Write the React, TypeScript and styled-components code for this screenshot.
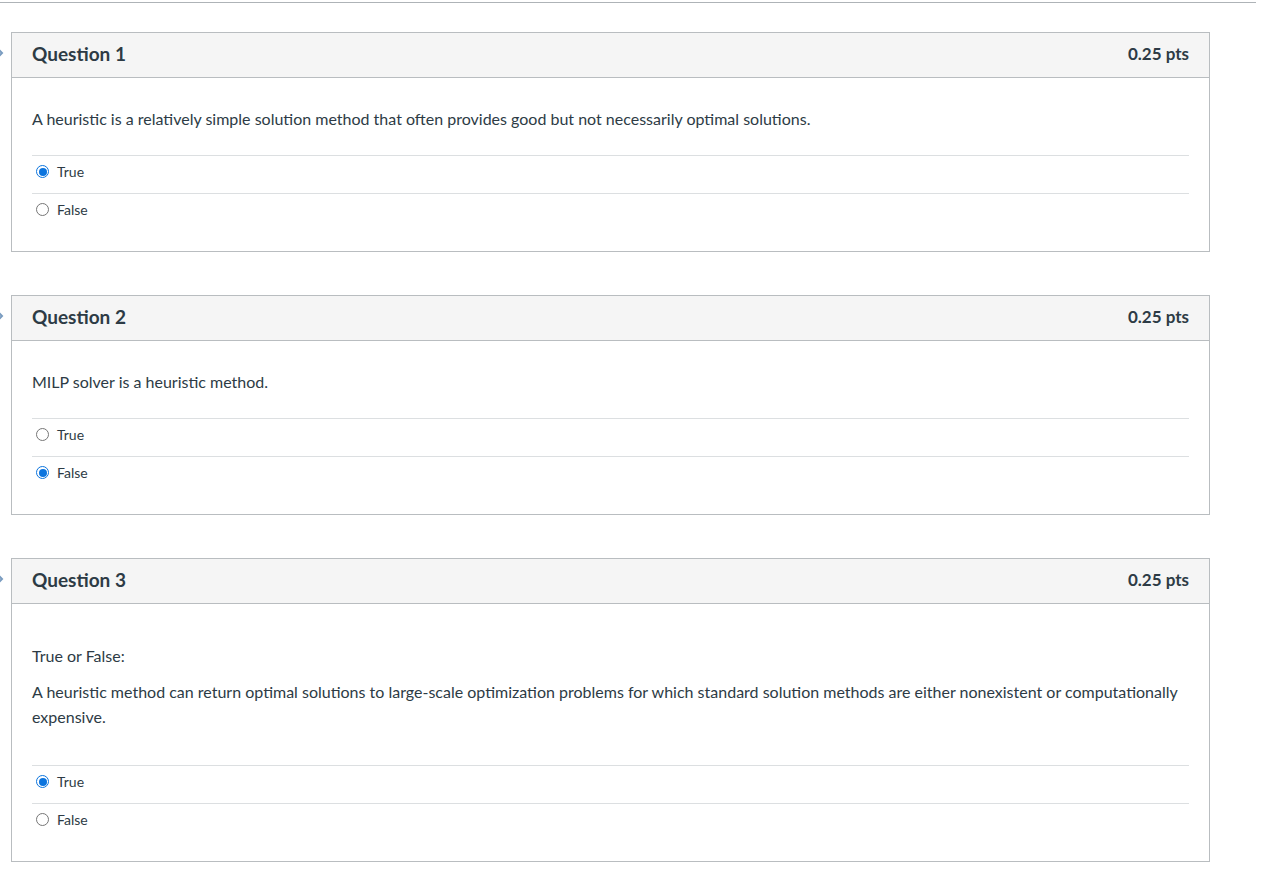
import React from 'react';
import styled, { createGlobalStyle } from 'styled-components';

const GlobalStyle = createGlobalStyle`
  html, body {
    margin: 0;
    padding: 0;
    background: #ffffff;
    font-family: Lato, "Open Sans", "Liberation Sans", sans-serif;
    color: #2d3b45;
  }
`;

const Page = styled.div`
  width: 1273px;
  padding-top: 2px;
`;

const TopRule = styled.div`
  width: 1256px;
  height: 1px;
  background: #aeb3b7;
  margin-bottom: 29px;
`;

const QuestionRow = styled.div`
  display: flex;
  margin-bottom: 43px;
`;

const Marker = styled.div`
  width: 11px;
  flex: none;
  overflow: hidden;
  display: flex;
  align-items: flex-start;
  padding-top: 16px;

  svg {
    margin-left: -4px;
  }
`;

const Card = styled.div`
  width: 1197px;
  border: 1px solid #b9bdc0;
  background: #ffffff;
`;

const Header = styled.div`
  height: 40px;
  padding: 0 20px 4px;
  background: #f5f5f5;
  border-bottom: 1px solid #b9bdc0;
  display: flex;
  align-items: center;
  justify-content: space-between;
`;

const Title = styled.div`
  font-size: 19px;
  font-weight: 700;
  color: #2d3b45;
`;

const Points = styled.div`
  font-size: 17px;
  font-weight: 700;
  color: #2d3b45;
`;

const Body = styled.div`
  padding: 28px 20px 20px;
`;

const QuestionText = styled.div`
  font-size: 16px;
  line-height: 25px;
  padding-bottom: 24px;
`;

const Paragraph = styled.p`
  margin: 11px 0;

  &:last-child {
    margin-bottom: 12px;
  }
`;

const Answer = styled.div`
  height: 31px;
  padding: 6px 0 0 4px;
  border-top: 1px solid #dcdfe1;
  display: flex;
  align-items: flex-start;
  gap: 8px;
  font-size: 14px;
  line-height: 20px;
  color: #2d3b45;
`;

const Radio = styled.span<{ checked?: boolean }>`
  width: 13px;
  height: 13px;
  margin-top: 3px;
  box-sizing: border-box;
  border-radius: 50%;
  border: 1px solid ${p => (p.checked ? '#0b74de' : '#767676')};
  display: flex;
  align-items: center;
  justify-content: center;
  background: #fff;

  &::after {
    content: '';
    display: ${p => (p.checked ? 'block' : 'none')};
    width: 8px;
    height: 8px;
    border-radius: 50%;
    background: #0b74de;
  }
`;

type Q = {
  n: number;
  text: string[];
  answer: 'True' | 'False';
};

const questions: Q[] = [
  {
    n: 1,
    text: [
      'A heuristic is a relatively simple solution method that often provides good but not necessarily optimal solutions.',
    ],
    answer: 'True',
  },
  {
    n: 2,
    text: ['MILP solver is a heuristic method.'],
    answer: 'False',
  },
  {
    n: 3,
    text: [
      'True or False:',
      'A heuristic method can return optimal solutions to large-scale optimization problems for which standard solution methods are either nonexistent or computationally expensive.',
    ],
    answer: 'True',
  },
];

function Chevron() {
  return (
    <svg width="8" height="10" viewBox="0 0 8 10">
      <path d="M2 1 L6 5 L2 9" fill="none" stroke="#7a9cc0" strokeWidth="2" />
    </svg>
  );
}

export default function App() {
  return (
    <Page>
      <GlobalStyle />
      <TopRule />
      {questions.map(q => (
        <QuestionRow key={q.n}>
          <Marker>
            <Chevron />
          </Marker>
          <Card>
            <Header>
              <Title>Question {q.n}</Title>
              <Points>0.25 pts</Points>
            </Header>
            <Body>
              <QuestionText>
                {q.text.length === 1
                  ? q.text[0]
                  : q.text.map(t => <Paragraph key={t}>{t}</Paragraph>)}
              </QuestionText>
              {(['True', 'False'] as const).map(a => (
                <Answer key={a}>
                  <Radio checked={q.answer === a} />
                  {a}
                </Answer>
              ))}
            </Body>
          </Card>
        </QuestionRow>
      ))}
    </Page>
  );
}
